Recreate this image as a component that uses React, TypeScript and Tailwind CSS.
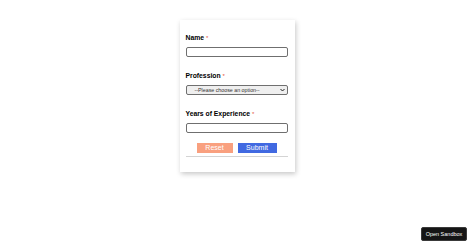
import React from 'react';

const fields = [
  { label: 'Name', kind: 'input' },
  { label: 'Profession', kind: 'select' },
  { label: 'Years of Experience', kind: 'input' },
];

const App = () => {
  return (
    <div className="relative min-h-[248px] w-full bg-white font-['Liberation_Sans',Arial,sans-serif]">
      {/* Form Card */}
      <div className="mx-auto pt-[20px] w-[115px]">
        <form className="bg-white shadow-[1px_2px_5px_rgba(0,0,0,0.22)] pl-[6px] pr-[7px] pt-[13px] pb-[15px] flex flex-col">
          {fields.map((field, i) => (
            <div key={i} className={`flex flex-col gap-[4px] ${i > 0 ? 'mt-[14px]' : ''}`}>
              <label className="text-[6.8px] leading-[10px] font-bold text-black">
                {field.label} <span className="text-[#e5533d] font-normal text-[6px] align-top">*</span>
              </label>
              {field.kind === 'input' ? (
                <input
                  type="text"
                  className="h-[10px] w-full border border-[#6f6f6f] rounded-[2px] bg-white outline-none"
                />
              ) : (
                <div className="h-[10px] w-full border border-[#6f6f6f] rounded-[2px] bg-[#efefef] flex items-center justify-between pl-[8px] pr-[2px]">
                  <span className="text-[5.3px] leading-[5px] text-[#333]">--Please choose an option--</span>
                  <svg width="5" height="4" viewBox="0 0 10 8">
                    <path d="M1 2 L5 6 L9 2" fill="none" stroke="#222" strokeWidth="2" />
                  </svg>
                </div>
              )}
            </div>
          ))}

          {/* Actions */}
          <div className="mt-[10px] flex justify-center gap-[5px] pb-[3px] border-b border-[#d4d4d4]">
            <button
              type="reset"
              className="w-[36px] h-[10px] bg-[#f9a07f] text-white text-[7px] leading-[10px]"
            >
              Reset
            </button>
            <button
              type="submit"
              className="w-[39px] h-[10px] bg-[#4169e1] text-white text-[7px] leading-[10px]"
            >
              Submit
            </button>
          </div>
        </form>
      </div>

      {/* Sandbox badge */}
      <div className="absolute right-[7px] bottom-[7px] h-[14px] w-[46px] bg-[#151515] border border-[#3a3a3a] rounded-[2px] flex items-center justify-center">
        <span className="text-white text-[5.5px] leading-[6px]">Open Sandbox</span>
      </div>
    </div>
  );
};

export default App;
